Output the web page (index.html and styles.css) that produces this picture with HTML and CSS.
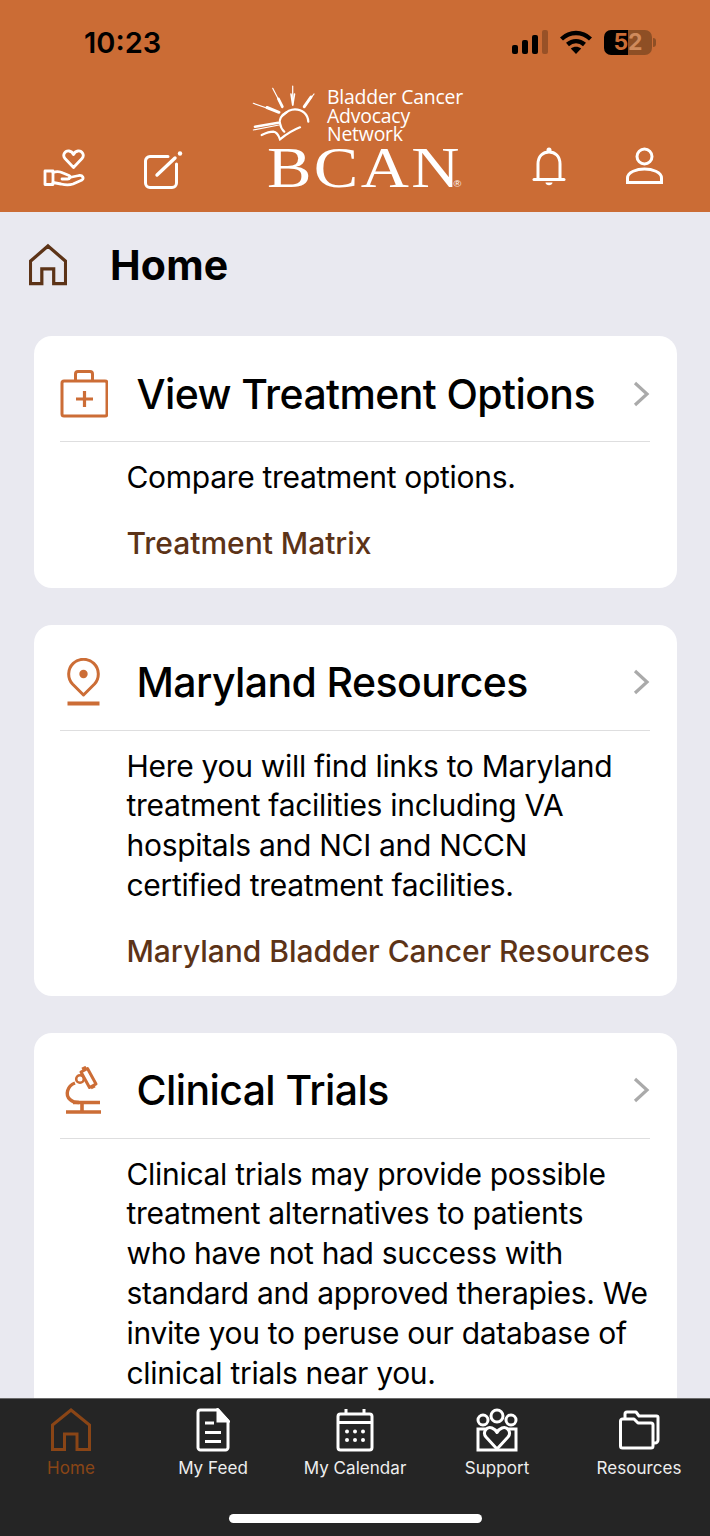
FILE: index.html
```html
<!DOCTYPE html>
<html lang="en">
<head>
    <meta charset="UTF-8">
    <meta name="viewport" content="width=device-width, initial-scale=1.0">
    <title>BCAN Home</title>
    <link rel="stylesheet" href="styles.css">
</head>
<body>
    <header class="top">
        <div class="status">
            <span class="time">10:23</span>
            <div class="status-icons">
                <svg class="signal" viewBox="0 0 36 24" width="36" height="24">
                    <rect x="0" y="15" width="6" height="9" rx="2"/>
                    <rect x="10" y="10" width="6" height="14" rx="2"/>
                    <rect x="20" y="5" width="6" height="19" rx="2"/>
                    <rect x="30" y="0" width="6" height="24" rx="2" opacity=".25"/>
                </svg>
                <svg class="wifi" viewBox="0 0 32 24" width="32" height="24">
                    <path d="M1.500 9C10 1 22 1 30.500 9" fill="none" stroke="#000" stroke-width="4.400"/>
                    <path d="M7.500 14.500C12.500 10 19.500 10 24.500 14.500" fill="none" stroke="#000" stroke-width="4.400"/>
                    <path d="M16 24L10.800 18.600C14 16 18 16 21.200 18.600Z"/>
                </svg>
                <div class="battery">
                    <span class="battery-text"><span class="digit-on">5</span><span class="digit-off">2</span></span>
                </div>
            </div>
        </div>
        <div class="top-row">
            <svg class="ic-hand" viewBox="0 0 42 40" width="42" height="40" fill="none" stroke="#fff" stroke-width="2.800" stroke-linejoin="round" stroke-linecap="round">
                <path d="M30.500 19.500L22 10.500C19 7 22 2.500 26 3C28 3.300 29.500 4.500 30.500 6.500C31.500 4.500 33 3.300 35 3C39 2.500 42 7 39 10.500Z"/>
                <rect x="2" y="23" width="8" height="13.500"/>
                <path d="M10 24.500C14 23 17 23.500 20 25L26 27.500C28 28.500 27 31 24.500 31H19"/>
                <path d="M26.500 29.500L36 27.500C40 27 41 30.500 39 32L30 36C27 37 22 37 18 36L10 34.500"/>
            </svg>
            <svg class="ic-edit" viewBox="0 0 40 40" width="40" height="40" fill="none" stroke="#fff" stroke-width="3" stroke-linecap="round">
                <path d="M25 6.500H7A4.500 4.500 0 0 0 2.500 11V33A4.500 4.500 0 0 0 7 37.500H29A4.500 4.500 0 0 0 33.500 33V14"/>
                <path d="M14 25L32 8" stroke-width="3.400"/>
                <circle cx="37" cy="3.500" r="2.200" fill="#fff" stroke="none"/>
            </svg>
            <div class="logo">
                <div class="logo-top">
                    <svg class="sun" viewBox="0 0 63 56" width="63" height="56" fill="none" stroke="#fff" stroke-linecap="round">
                        <!-- wheat rays -->
                        <path d="M1.300 18.300L27 27.300" stroke-width="1.200"/>
                        <path d="M15 22.500L27 27.300" stroke-width="3"/>
                        <path d="M20.700 3.300L30.300 21.700" stroke-width="1.200"/>
                        <path d="M26.500 14L30.300 21.700" stroke-width="2.800"/>
                        <path d="M40.700 1V20" stroke-width="1.200"/>
                        <path d="M39 9L40.700 20M42.500 9L40.700 20" stroke-width="1.600"/>
                        <path d="M62 9L52.300 21.700" stroke-width="1.200"/>
                        <path d="M59 12L52.300 21.700" stroke-width="3"/>
                        <path d="M1.300 45L27 40" stroke-width="1.200"/>
                        <path d="M3 41.700L26.300 37.700" stroke-width="2.600"/>
                        <!-- sun and open book -->
                        <path d="M31.300 30C35 26 39 24.300 43 24.300C50 24.300 56 29 56.300 36.700" stroke-width="2.200"/>
                        <path d="M34.700 27.300C29 30 27 35 28 38.300C28.500 41.500 30 44.500 32.300 46.700" stroke-width="2.200"/>
                        <path d="M9.700 50C14 48 18 46.700 21.300 46.700C24 47 26.500 50 28 54.300C34 49.500 41 45 48 42.300" stroke-width="2.200"/>
                    </svg>
                    <div class="logo-name">Bladder Cancer<br>Advocacy<br>Network</div>
                </div>
                <div class="logo-mark">BCAN<span class="reg">®</span></div>
            </div>
            <svg class="ic-bell" viewBox="0 0 34 40" width="34" height="40" fill="none" stroke="#fff" stroke-width="3">
                <path d="M6 33V18C6 10 11 6 17 6C23 6 28 10 28 18V33"/>
                <path d="M2 33.500H32" stroke-linecap="round"/>
                <circle cx="17" cy="4" r="2.500" fill="#fff" stroke="none"/>
                <path d="M13.500 36.500H20.500C20.500 40 13.500 40 13.500 36.500Z" fill="#fff" stroke="none"/>
            </svg>
            <svg class="ic-user" viewBox="0 0 40 40" width="40" height="40" fill="none" stroke="#fff" stroke-width="3">
                <circle cx="19.500" cy="10.500" r="7.500"/>
                <path d="M2.500 36.500V32C2.500 26 12 23 19.500 23C27 23 36.500 26 36.500 32V36.500Z"/>
            </svg>
        </div>
    </header>

    <main class="content">
        <div class="page-title">
            <svg class="ic-home" viewBox="0 0 40 44" width="38" height="44" fill="none" stroke="#5c3317" stroke-width="3.400">
                <path d="M20 2L38.500 18V41.500H26V26H13.500V41.500H1.500V18Z"/>
            </svg>
            <h1>Home</h1>
        </div>

        <section class="card">
            <div class="card-head">
                <span class="card-icon">
                    <svg viewBox="0 0 48 48" width="48" height="48" fill="none" stroke="#cc6d36" stroke-width="3" stroke-linejoin="round">
                        <rect x="2" y="11" width="45" height="35" rx="2"/>
                        <path d="M15.500 11V4A2.500 2.500 0 0 1 18 1.500H30A2.500 2.500 0 0 1 32.500 4V11"/>
                        <path d="M24.500 21V37M16 29H33" stroke-width="3.200"/>
                    </svg>
                </span>
                <h2>View Treatment Options</h2>
                <svg class="chev" viewBox="0 0 18 26" width="18" height="26"><path d="M3 2L15 13L3 24" fill="none" stroke="#aaa" stroke-width="3.200"/></svg>
            </div>
            <div class="card-body">
                <p>Compare treatment options.</p>
                <a class="card-link">Treatment Matrix</a>
            </div>
        </section>

        <section class="card">
            <div class="card-head">
                <span class="card-icon">
                    <svg viewBox="0 0 48 48" width="48" height="48" fill="none" stroke="#cc6d36" stroke-width="3">
                        <path d="M23.500 37L12.500 26A14.800 14.800 0 1 1 34.500 26Z" stroke-linejoin="round"/>
                        <circle cx="23.500" cy="16" r="4.200" fill="#cc6d36" stroke="none"/>
                        <path d="M7.500 45.500H39.500" stroke-width="3.800"/>
                    </svg>
                </span>
                <h2>Maryland Resources</h2>
                <svg class="chev" viewBox="0 0 18 26" width="18" height="26"><path d="M3 2L15 13L3 24" fill="none" stroke="#aaa" stroke-width="3.200"/></svg>
            </div>
            <div class="card-body">
                <p>Here you will find links to Maryland<br>treatment facilities including VA<br>hospitals and NCI and NCCN<br>certified treatment facilities.</p>
                <a class="card-link">Maryland Bladder Cancer Resources</a>
            </div>
        </section>

        <section class="card">
            <div class="card-head">
                <span class="card-icon">
                    <svg viewBox="0 0 48 48" width="48" height="48" fill="none" stroke="#cc6d36" stroke-width="3.400">
                        <path d="M6 46H41M13 36.500H40M22 37V46" stroke-width="3.600"/>
                        <path d="M15 17C7 20 5 29 10 33.500C12 35.500 16 36.500 19 36.500"/>
                        <circle cx="20" cy="13" r="3.800" stroke-width="2.600"/>
                        <path d="M21 6L27.500 2.500L36 18L29.500 21.500Z" stroke-width="3" stroke-linejoin="round"/>
                        <path d="M22 3L26 1M31 22L35 20" stroke-width="2.600"/>
                    </svg>
                </span>
                <h2>Clinical Trials</h2>
                <svg class="chev" viewBox="0 0 18 26" width="18" height="26"><path d="M3 2L15 13L3 24" fill="none" stroke="#aaa" stroke-width="3.200"/></svg>
            </div>
            <div class="card-body">
                <p>Clinical trials may provide possible<br>treatment alternatives to patients<br>who have not had success with<br>standard and approved therapies. We<br>invite you to peruse our database of<br>clinical trials near you.</p>
            </div>
        </section>
    </main>

    <nav class="tabs">
        <div class="tab tab-active">
            <svg viewBox="0 0 40 44" width="40" height="44" fill="none" stroke="#8a4516" stroke-width="3">
                <path d="M20 2L38.500 17V41.500H26V26H13.500V41.500H1.500V17Z"/>
            </svg>
            <span>Home</span>
        </div>
        <div class="tab">
            <svg viewBox="0 0 34 44" width="34" height="44" fill="none" stroke="#fff" stroke-width="3">
                <path d="M22 2H4.500A2.500 2.500 0 0 0 2 4.500V39.500A2.500 2.500 0 0 0 4.500 42H29.500A2.500 2.500 0 0 0 32 39.500V13Z" stroke-linejoin="round"/>
                <path d="M22 2V13H32Z" fill="#fff"/>
                <path d="M9 15H18M9 24.500H25M9 33.500H25"/>
            </svg>
            <span>My Feed</span>
        </div>
        <div class="tab">
            <svg viewBox="0 0 38 44" width="38" height="44" fill="none" stroke="#fff" stroke-width="3">
                <rect x="2" y="6" width="34" height="36" rx="2.500"/>
                <path d="M2 14.500H36M10 1V7M28 1V7"/>
                <g fill="#fff" stroke="none">
                    <circle cx="11" cy="23.500" r="2"/><circle cx="19" cy="23.500" r="2"/><circle cx="27" cy="23.500" r="2"/>
                    <circle cx="11" cy="32" r="2"/><circle cx="19" cy="32" r="2"/><circle cx="27" cy="32" r="2"/>
                </g>
            </svg>
            <span>My Calendar</span>
        </div>
        <div class="tab">
            <svg viewBox="0 0 44 44" width="44" height="44" fill="none" stroke="#fff" stroke-width="3">
                <circle cx="8" cy="12" r="5"/><circle cx="22" cy="8" r="6"/><circle cx="36" cy="12" r="5"/>
                <path d="M12 21H3V42H41V21H32"/>
                <path d="M22 41L11 29C7 24 12 18 17 20C19.500 21 21 22.500 22 24.500C23 22.500 24.500 21 27 20C32 18 37 24 33 29Z" stroke-linejoin="round"/>
            </svg>
            <span>Support</span>
        </div>
        <div class="tab">
            <svg viewBox="0 0 42 44" width="42" height="44" fill="none" stroke="#fff" stroke-width="3" stroke-linejoin="round">
                <path d="M2.500 38V13A2 2 0 0 1 4.500 11H16L20 15H33A2 2 0 0 1 35 17V38A2 2 0 0 1 33 40H4.500A2 2 0 0 1 2.500 38Z"/>
                <path d="M7 11V6A2 2 0 0 1 9 4H18L21 8H38.500A1.500 1.500 0 0 1 40 9.500V32A3 3 0 0 1 37 35H35"/>
            </svg>
            <span>Resources</span>
        </div>
        <div class="home-bar"></div>
    </nav>
</body>
</html>
```

FILE: styles.css
```css
* {
    box-sizing: border-box;
}
html, body {
    margin: 0;
    padding: 0;
}
body {
    width: 710px;
    height: 1536px;
    overflow: hidden;
    display: flex;
    flex-direction: column;
    background-color: #e9e9f0;
    font-family: Inter, "Liberation Sans", sans-serif;
    color: #000;
}

/* orange header */
.top {
    height: 212px;
    flex-shrink: 0;
    background-color: #cb6c35;
}
.status {
    display: flex;
    justify-content: space-between;
    align-items: center;
    height: 26px;
    margin-top: 29px;
    padding: 0 58px 0 84px;
}
.time {
    font-size: 29px;
    font-weight: 600;
}
.status-icons {
    display: flex;
    align-items: center;
}
.signal {
    margin-right: 12px;
}
.wifi {
    margin-right: 12px;
}
.battery {
    width: 48px;
    height: 25px;
    border-radius: 7px;
    background: linear-gradient(to right, #000 50%, #8e4f25 50%);
    position: relative;
}
.battery::after {
    content: "";
    position: absolute;
    right: -4px;
    top: 8px;
    width: 3px;
    height: 9px;
    border-radius: 0 3px 3px 0;
    background-color: #8e4f25;
}
.battery-text {
    display: flex;
    justify-content: center;
    font-size: 23px;
    line-height: 25px;
    font-weight: 700;
}
.digit-on {
    color: #cb6c35;
}
.digit-off {
    color: #cf8a5c;
}

.top-row {
    display: flex;
    align-items: flex-end;
    margin-top: 30px;
    padding-left: 43px;
    height: 105px;
}
.ic-hand {
    margin-bottom: 2px;
}
.ic-edit {
    margin-left: 58px;
}
.ic-bell {
    margin-left: 68px;
    margin-bottom: 4px;
}
.ic-user {
    margin-left: 59px;
    margin-bottom: 4px;
}

.logo {
    margin-left: 69px;
    margin-bottom: -3px;
    width: 212px;
    color: #fff;
}
.logo-top {
    display: flex;
    align-items: flex-start;
}
.sun {
    flex-shrink: 0;
    margin-top: -3px;
    margin-bottom: 3px;
}
.logo-name {
    margin-left: 12px;
    font-family: "Open Sans", sans-serif;
    font-size: 19.400px;
    line-height: 18.500px;
    letter-spacing: -0.2px;
    white-space: nowrap;
}
.logo-mark {
    margin-left: 15px;
    margin-top: -1px;
    font-family: "Liberation Serif", serif;
    font-size: 57px;
    line-height: 50px;
    letter-spacing: 2px;
    white-space: nowrap;
    transform: scaleX(1.17);
    transform-origin: left center;
}
.reg {
    margin-left: -7px;
    font-size: 9px;
    line-height: 0;
    letter-spacing: 0;
    font-family: "Liberation Sans", sans-serif;
}

/* page body */
.content {
    flex: 1;
    min-height: 0;
    overflow: hidden;
    padding: 0 33.500px;
}
.page-title {
    display: flex;
    align-items: center;
    height: 124px;
    padding-bottom: 19px;
    margin-left: -5px;
}
.page-title h1 {
    margin: 0 0 0 43.500px;
    font-size: 41px;
    font-weight: 700;
    letter-spacing: 0.2px;
}
.card {
    background-color: #fff;
    border-radius: 18px;
    padding: 0 26.500px 24px;
    margin-bottom: 37px;
}
.card-head {
    display: flex;
    align-items: center;
    height: 106px;
    padding-top: 10px;
    border-bottom: 1px solid #dededf;
}
.card-icon {
    display: flex;
    width: 76.500px;
    flex-shrink: 0;
}
.card-head h2 {
    flex: 1;
    margin: 0;
    font-size: 41px;
    font-weight: 500;
    letter-spacing: -0.6px;
    white-space: nowrap;
}
.chev {
    flex-shrink: 0;
}
.card-body {
    padding: 16px 0 0 66.500px;
    font-size: 30px;
    line-height: 39.800px;
    letter-spacing: -0.3px;
}
.card-body p {
    margin: 0;
    white-space: nowrap;
}
.card-link {
    display: block;
    margin-top: 26px;
    color: #5c3317;
    font-weight: 500;
    letter-spacing: -0.03px;
    white-space: nowrap;
}

/* bottom tabs */
.tabs {
    position: relative;
    display: grid;
    grid-template-columns: repeat(5, 1fr);
    height: 138px;
    flex-shrink: 0;
    padding-top: 9px;
    background-color: #252525;
    border-top: 1px solid #6b6b6b;
}
.tab {
    display: flex;
    flex-direction: column;
    align-items: center;
    color: #eee;
    font-size: 17px;
    letter-spacing: 0.05px;
}
.tab svg {
    height: 44px;
}
.tab span {
    margin-top: 6px;
}
.tab-active {
    color: #8a4516;
}
.home-bar {
    position: absolute;
    left: 229px;
    bottom: 13px;
    width: 253px;
    height: 9px;
    border-radius: 5px;
    background-color: #fff;
}
```
